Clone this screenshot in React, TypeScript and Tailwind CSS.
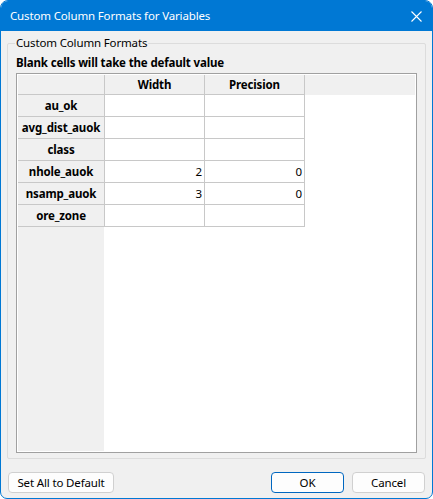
import React from "react";

const rows: { name: string; width: string; precision: string }[] = [
  { name: "au_ok", width: "", precision: "" },
  { name: "avg_dist_auok", width: "", precision: "" },
  { name: "class", width: "", precision: "" },
  { name: "nhole_auok", width: "2", precision: "0" },
  { name: "nsamp_auok", width: "3", precision: "0" },
  { name: "ore_zone", width: "", precision: "" },
];

export default function App() {
  return (
    <div
      className="w-[433px] h-[499px] overflow-hidden rounded-t-[8px] rounded-b-[7px] border border-[#0078d4] bg-[#f0f0f0] flex flex-col text-[11.5px] tracking-[-0.15px] text-black"
      style={{ fontFamily: '"Segoe UI", "Noto Sans", sans-serif' }}
    >
      {/* Title bar */}
      <div className="h-[30px] shrink-0 bg-[#0078d4] flex items-center justify-between pl-[9px] pr-[10px] text-white">
        <span className="leading-none">Custom Column Formats for Variables</span>
        <svg width="11" height="11" viewBox="0 0 11 11">
          <path d="M0.5 0.5 L10.5 10.5 M10.5 0.5 L0.5 10.5" stroke="white" strokeWidth="1.1" />
        </svg>
      </div>

      {/* Body */}
      <div className="flex-1 flex flex-col px-[6px] pt-[12px]">
        {/* Group box */}
        <div className="relative h-[416px] border border-[#dcdcdc] rounded-[2px] px-[8px] pt-[10px]">
          <span className="absolute left-[7px] top-[-10px] bg-[#f0f0f0] px-[1px] leading-[18px]">
            Custom Column Formats
          </span>
          <div className="font-bold leading-[18px]">Blank cells will take the default value</div>

          {/* Grid */}
          <div className="mt-[1px] h-[380px] border border-[#a0a0a0] bg-white p-[1px] flex flex-col">
            {/* Header */}
            <div className="flex h-[20px] shrink-0 bg-[#f0f0f0] font-bold">
              <div className="w-[87px] border-r border-b border-[#c8c8c8]" />
              <div className="w-[100px] border-r border-b border-[#c8c8c8] flex items-center justify-center">
                Width
              </div>
              <div className="w-[100px] border-r border-b border-[#c8c8c8] flex items-center justify-center">
                Precision
              </div>
              <div className="flex-1" />
            </div>

            {/* Rows */}
            {rows.map((r) => (
              <div key={r.name} className="flex h-[22px] shrink-0">
                <div className="w-[87px] bg-[#f0f0f0] border-r border-b border-[#c8c8c8] font-bold flex items-center justify-center">
                  {r.name}
                </div>
                <div className="w-[100px] border-r border-b border-[#c8c8c8] flex items-center justify-end pr-[2px]">
                  {r.width}
                </div>
                <div className="w-[100px] border-r border-b border-[#c8c8c8] flex items-center justify-end pr-[2px]">
                  {r.precision}
                </div>
                <div className="flex-1" />
              </div>
            ))}

            {/* Empty area */}
            <div className="flex flex-1">
              <div className="w-[86px] bg-[#f0f0f0]" />
              <div className="flex-1" />
            </div>
          </div>
        </div>

        {/* Buttons */}
        <div className="flex items-center mt-[13px] px-[1px]">
          <button className="h-[21px] w-[106px] rounded-[4px] border border-[#d0d0d0] bg-[#fdfdfd] leading-none">
            Set All to Default
          </button>
          <div className="flex-1" />
          <button className="h-[21px] w-[73px] rounded-[4px] border border-[#0067c0] bg-[#fdfdfd] leading-none">
            OK
          </button>
          <button className="ml-[8px] h-[21px] w-[73px] rounded-[4px] border border-[#d0d0d0] bg-[#fdfdfd] leading-none">
            Cancel
          </button>
        </div>
      </div>
    </div>
  );
}
